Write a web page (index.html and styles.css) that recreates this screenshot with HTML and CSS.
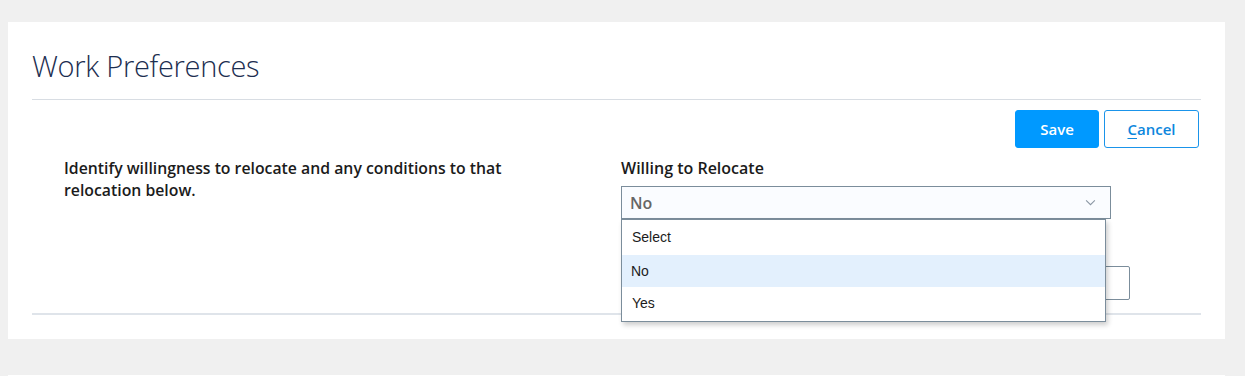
FILE: index.html
```html
<!DOCTYPE html>
<html lang="en">
<head>
  <meta charset="UTF-8" />
  <title>Work Preferences</title>
  <link rel="stylesheet" href="styles.css">
</head>
<body>
  <div class="card">
    <div class="card-header">
      <h2>Work Preferences</h2>
    </div>
    <div class="actions">
      <button class="btn btn-primary">Save</button>
      <button class="btn btn-outline"><u>C</u>ancel</button>
    </div>
    <div class="form-row">
      <div class="intro">Identify willingness to relocate and any conditions to that relocation below.</div>
      <div class="field">
        <label class="field-label">Willing to Relocate</label>
        <div class="select-wrap">
          <div class="select">
            <span>No</span>
            <svg viewBox="0 0 12 8"><path d="M1 1.5l5 5 5-5" fill="none" stroke="#8a96a3" stroke-width="1.2"/></svg>
          </div>
          <ul class="dropdown">
            <li>Select</li>
            <li class="active">No</li>
            <li>Yes</li>
          </ul>
        </div>
        <div class="conditions"></div>
      </div>
    </div>
    <div class="card-footer"></div>
  </div>
  <div class="card next"></div>
</body>
</html>
```

FILE: styles.css
```css
body {
  margin: 0;
  padding: 22px 20px 0 8px;
  background-color: #f0f0f0;
  font-family: 'Open Sans', 'Segoe UI', sans-serif;
  color: #1b1b1b;
  overflow: hidden;
}

.card {
  width: 1169px;
  height: 317px;
  padding: 0 24px;
  background-color: #fff;
}

.card-header {
  height: 77px;
  border-bottom: 1px solid #d8dde3;
}

.card-header h2 {
  margin: 0;
  padding-top: 26px;
  font-size: 29px;
  font-weight: 300;
  line-height: 36px;
  color: #1c2e50;
  letter-spacing: -0.3px;
}

.actions {
  display: flex;
  justify-content: flex-end;
  gap: 5px;
  padding: 10px 2px 0 0;
}

.btn {
  height: 38px;
  border-radius: 3px;
  font-family: 'Open Sans', sans-serif;
  font-size: 15px;
  font-weight: 600;
  cursor: pointer;
}

.btn-primary {
  width: 84px;
  background-color: #0099ff;
  border: 1px solid #0099ff;
  color: #fff;
}

.btn-outline {
  width: 95px;
  background-color: #fff;
  border: 1px solid #1a94ea;
  color: #0d87dd;
}

.btn-outline u { text-decoration-thickness: 1px; text-underline-offset: 3px; }

.form-row {
  display: flex;
  margin-top: 9px;
}

.intro {
  width: 470px;
  padding-left: 32px;
  margin-right: 87px;
  font-size: 15.8px;
  font-weight: 600;
  line-height: 22px;
  color: #1b1b1b;
}

.field {
  flex: 1;
}

.field-label {
  display: block;
  font-size: 16px;
  font-weight: 600;
  line-height: 22px;
  color: #1b1b1b;
  margin-bottom: 7px;
}

.select-wrap {
  position: relative;
  width: 490px;
}

.select {
  height: 31px;
  border: 1px solid #7b8d9b;
  background-color: #fafcff;
  display: flex;
  align-items: center;
  justify-content: space-between;
  padding: 0 14px 0 8px;
  font-size: 16px;
  font-weight: 600;
  color: #666;
}

.select svg { width: 11px; height: 7px; }

.dropdown {
  position: absolute;
  top: 33px;
  left: 0;
  width: 483px;
  margin: 0;
  padding: 0;
  list-style: none;
  background-color: #fff;
  border: 1px solid #7b8d9b;
  box-shadow: 2px 3px 5px rgba(0, 0, 0, 0.2);
  font-family: 'Liberation Sans', Arial, sans-serif;
  font-size: 14px;
  color: #1b1b1b;
  z-index: 5;
}

.dropdown li {
  height: 32px;
  line-height: 32px;
  padding-left: 10px;
}

.dropdown li:first-child { height: 35px; line-height: 34px; }
.dropdown li:last-child { height: 34px; }

.dropdown li.active {
  background-color: #e3f0fd;
  padding-left: 9px;
}

.conditions {
  width: 507px;
  height: 32px;
  margin-top: 47px;
  border: 1px solid #7b8d9b;
  border-radius: 2px;
}

.card-footer {
  margin-top: 13px;
  border-bottom: 2px solid #dfe4ea;
}

.card.next {
  height: 10px;
  margin-top: 36px;
}
```
